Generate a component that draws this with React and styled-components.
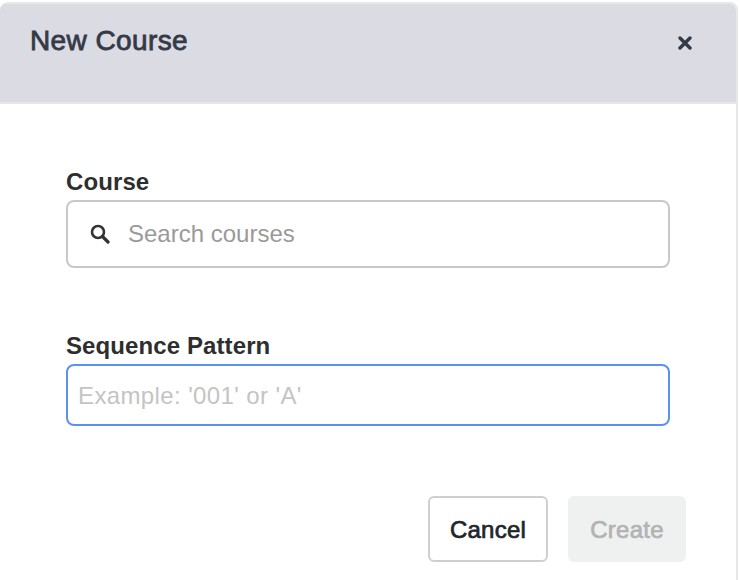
import React from 'react';
import styled, { createGlobalStyle } from 'styled-components';

const GlobalStyle = createGlobalStyle`
  html, body {
    margin: 0;
    background: #fff;
    font-family: "Liberation Sans", Arial, sans-serif;
  }
`;

const Page = styled.div`
  width: 740px;
  height: 580px;
  padding-top: 2px;
  box-sizing: border-box;
  overflow: hidden;
`;

const Modal = styled.div`
  width: 738px;
  height: 578px;
  box-sizing: border-box;
  background: #fff;
  border-top: 2px solid #e8e8e8;
  border-right: 2px solid #e8e8e8;
  border-top-left-radius: 8px;
  border-top-right-radius: 8px;
`;

const Header = styled.div`
  height: 100px;
  box-sizing: border-box;
  display: flex;
  justify-content: space-between;
  align-items: flex-start;
  padding: 18px 44px 0 30px;
  background: #dbdbe4;
  border-bottom: 2px solid #e8e8e8;
  border-top-left-radius: 6px;
  border-top-right-radius: 6px;
`;

const Title = styled.h1`
  margin: 0;
  font-size: 28px;
  line-height: 38px;
  font-weight: 400;
  letter-spacing: 0.4px;
  -webkit-text-stroke: 0.8px #343a46;
  color: #343a46;
`;

const CloseButton = styled.button`
  display: flex;
  padding: 0;
  margin-top: 14px;
  border: 0;
  background: none;
  color: #343a46;
`;

const Form = styled.form`
  display: flex;
  flex-direction: column;
  gap: 64px;
  padding: 64px 66px 0;
`;

const Field = styled.div`
  display: flex;
  flex-direction: column;
  gap: 4px;
`;

const Label = styled.label`
  font-size: 24px;
  line-height: 28px;
  font-weight: 700;
  letter-spacing: 0.1px;
  color: #2e2e2e;
`;

const InputBox = styled.div`
  display: flex;
  align-items: center;
  box-sizing: border-box;
  height: ${(p) => p.$height}px;
  padding-left: ${(p) => (p.$focused ? 10 : 22)}px;
  gap: 18px;
  background: #fff;
  border: 2px solid ${(p) => (p.$focused ? '#5b92f0' : '#c8c8c8')};
  border-radius: 8px;
`;

const Input = styled.input`
  flex: 1;
  min-width: 0;
  height: 100%;
  box-sizing: border-box;
  padding: ${(p) => (p.$spread ? '2px 0 0' : 0)};
  border: 0;
  outline: none;
  background: none;
  font-family: inherit;
  font-size: 24px;
  letter-spacing: ${(p) => (p.$spread ? '0.38px' : 0)};
  color: #2e2e2e;

  &::placeholder {
    color: ${(p) => p.$hint};
    opacity: 1;
  }
`;

const Footer = styled.div`
  display: flex;
  justify-content: flex-end;
  gap: 20px;
  padding: 70px 50px 0 0;
`;

const Button = styled.button`
  width: ${(p) => p.$width}px;
  height: 66px;
  box-sizing: border-box;
  padding: 2px 0 0;
  font-family: inherit;
  font-size: 24px;
  font-weight: 400;
  letter-spacing: 0.25px;
  -webkit-text-stroke: 0.7px ${(p) => (p.disabled ? '#b3b3b3' : '#21252b')};
  border-radius: 6px;
  border: 2px solid ${(p) => (p.disabled ? '#eff0f0' : '#cfcfcf')};
  background: ${(p) => (p.disabled ? '#eff0f0' : '#fff')};
  color: ${(p) => (p.disabled ? '#b3b3b3' : '#21252b')};
`;

const SearchIcon = () => (
  <svg width="20" height="20" viewBox="0 0 20 20" fill="none" stroke="#333">
    <circle cx="8" cy="8" r="6" strokeWidth="2.6" />
    <path d="M12.5 12.5 L18 18" strokeWidth="3.2" strokeLinecap="round" />
  </svg>
);

const CloseIcon = () => (
  <svg width="14" height="14" viewBox="0 0 14 14" fill="none" stroke="currentColor">
    <path d="M2 2 L12 12 M12 2 L2 12" strokeWidth="3.4" strokeLinecap="round" />
  </svg>
);

export default function App() {
  return (
    <Page>
      <GlobalStyle />
      <Modal>
        <Header>
          <Title>New Course</Title>
          <CloseButton type="button" aria-label="Close">
            <CloseIcon />
          </CloseButton>
        </Header>
        <Form>
          <Field>
            <Label htmlFor="course">Course</Label>
            <InputBox $height={68}>
              <SearchIcon />
              <Input id="course" $hint="#9a9a9a" placeholder="Search courses" />
            </InputBox>
          </Field>
          <Field>
            <Label htmlFor="pattern">Sequence Pattern</Label>
            <InputBox $height={62} $focused>
              <Input id="pattern" $spread $hint="#c4c4c4" placeholder="Example: '001' or 'A'" />
            </InputBox>
          </Field>
        </Form>
        <Footer>
          <Button type="button" $width={120}>Cancel</Button>
          <Button type="button" $width={118} disabled>Create</Button>
        </Footer>
      </Modal>
    </Page>
  );
}
